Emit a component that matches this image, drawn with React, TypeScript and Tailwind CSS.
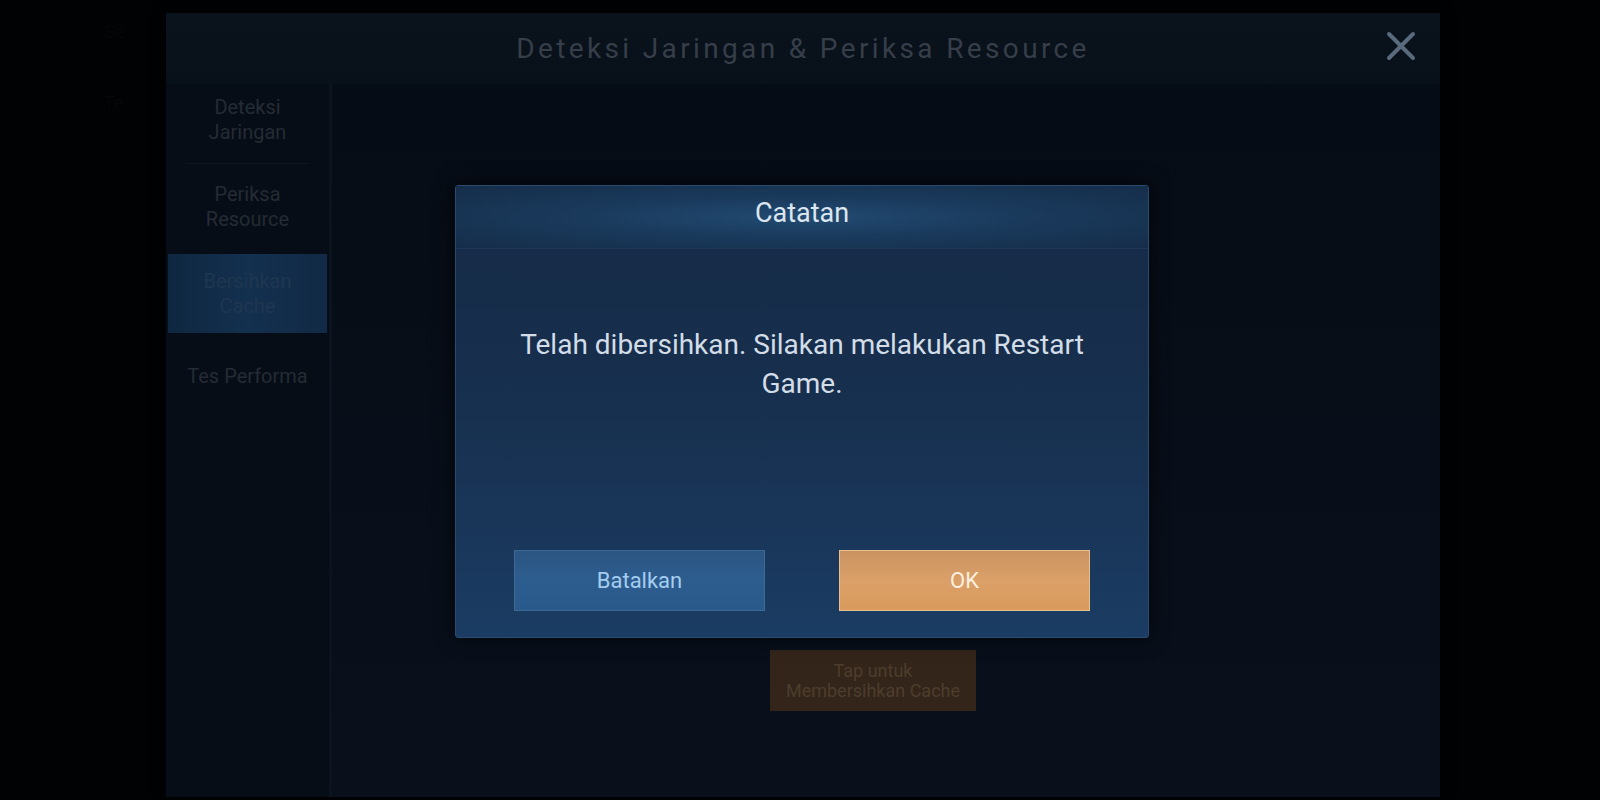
const font = { fontFamily: "Roboto, 'Liberation Sans', sans-serif" };

const menu = [
  { label: "Deteksi Jaringan", active: false, box: "h-[79px] pb-[8px]" },
  { label: "Periksa Resource", active: false, box: "h-[85px]" },
  { label: "Bersihkan Cache", active: true, box: "mt-[5px] h-[79px]" },
  { label: "Tes Performa", active: false, box: "h-[86px]" },
];

export default function App() {
  return (
    <div className="relative h-[800px] w-[1600px] overflow-hidden bg-[#010204]" style={font}>
      <Backdrop />
      <Panel />
      <NoteDialog />
    </div>
  );
}

function Backdrop() {
  return (
    <div className="absolute left-[104px] top-[18px] flex flex-col gap-[44px] text-[18px] text-[#050608]">
      <span>Se</span>
      <span>Te</span>
    </div>
  );
}

function Panel() {
  return (
    <div className="ml-[166px] mt-[13px] flex h-[784px] w-[1274px] flex-col bg-[#070d16] shadow-[0_0_12px_rgba(0,0,0,0.9)]">
      <div className="relative flex h-[71px] shrink-0 items-center justify-center bg-gradient-to-b from-[#0a121c] to-[#08101a]">
        <span className="text-[28px] tracking-[0.12em] text-[#363e49]">
          Deteksi Jaringan &amp; Periksa Resource
        </span>
        <CloseIcon />
      </div>
      <div className="flex min-h-0 flex-1">
        <Sidebar />
        <div className="relative flex-1 bg-gradient-to-b from-[#060c15] to-[#09101c]">
          <div className="absolute left-[438px] top-[566px] flex h-[61px] w-[206px] flex-col items-center justify-center bg-[#33251a] text-[18px] leading-[20px] text-[#4d3d2c]">
            <span>Tap untuk</span>
            <span>Membersihkan Cache</span>
          </div>
        </div>
      </div>
    </div>
  );
}

function CloseIcon() {
  return (
    <svg className="absolute right-[24px] top-[18px]" width="30" height="30" viewBox="0 0 30 30">
      <path d="M3 3 L27 27 M27 3 L3 27" stroke="#586a7c" strokeWidth="4" strokeLinecap="round" />
    </svg>
  );
}

function Sidebar() {
  return (
    <div className="flex w-[166px] shrink-0 flex-col border-r-[3px] border-[#0b131e] bg-[#070d16]">
      {menu.map((item, i) => (
        <div key={item.label}>
          <div className={`${item.box} ${item.active ? "ml-[2px] mr-[2px] bg-gradient-to-r from-[#0f2740] via-[#13304f] to-[#112a45] text-[#1f3650]" : "text-[#242b34]"} flex items-center justify-center px-3 text-center text-[20px] leading-[25px]`}>
            <span className="whitespace-pre-line">{i === 3 ? item.label : item.label.replace(" ", "\n")}</span>
          </div>
          {i === 0 && <div className="mx-[20px] h-px bg-[#0d151f]" />}
        </div>
      ))}
    </div>
  );
}

function NoteDialog() {
  return (
    <div className="absolute left-[455px] top-[185px] flex h-[453px] w-[694px] flex-col rounded-[3px] border border-[#2a4a6e] bg-gradient-to-b from-[#152a45] via-[#17304f] to-[#1b3c63] shadow-[0_0_20px_rgba(0,0,0,0.7)]">
      <div className="flex h-[63px] shrink-0 items-center justify-center border-b border-[#1c3758] bg-[radial-gradient(ellipse_at_center,#224a72_0%,#1a3a5c_45%,#152d49_100%)] pb-[8px]">
        <span className="text-[27px] text-[#dbe6f0]">Catatan</span>
      </div>
      <div className="flex flex-1 flex-col items-center pt-[76px] text-center text-[28px] leading-[39px] text-[#d3dde7]">
        <span>Telah dibersihkan. Silakan melakukan Restart</span>
        <span>Game.</span>
      </div>
      <div className="flex justify-between px-[58px] pb-[26px]">
        <div className="flex h-[61px] w-[251px] items-center justify-center border border-[#3c6996] bg-gradient-to-b from-[#2b5582] via-[#2d5d8f] to-[#2a5a8c] text-[22px] text-[#a4cdf0]">
          Batalkan
        </div>
        <div className="flex h-[61px] w-[251px] items-center justify-center border border-[#e8c090] bg-gradient-to-b from-[#c99362] via-[#dba068] to-[#d99a5c] text-[22px] text-[#fbefe0]">
          OK
        </div>
      </div>
    </div>
  );
}
